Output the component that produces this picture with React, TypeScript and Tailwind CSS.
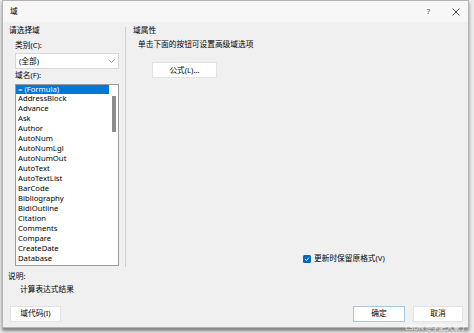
import React from "react";

const fields = [
  "AddressBlock",
  "Advance",
  "Ask",
  "Author",
  "AutoNum",
  "AutoNumLgl",
  "AutoNumOut",
  "AutoText",
  "AutoTextList",
  "BarCode",
  "Bibliography",
  "BidiOutline",
  "Citation",
  "Comments",
  "Compare",
  "CreateDate",
  "Database",
];

const font = {
  fontFamily: '"Noto Sans", "Noto Sans CJK SC", sans-serif',
};

const App = () => {
  return (
    <div
      className="w-[474px] h-[333px] bg-[#ebebeb] overflow-hidden text-[7.7px] text-black leading-none"
      style={font}
    >
      <div className="ml-[2px] w-[467px] h-[328px] bg-[#f0f0f0] border border-[#b4b4b4] flex flex-col shadow-[0_3px_3px_rgba(0,0,0,0.45)]">
        {/* Title bar */}
        <div className="h-[21px] bg-[#f7f7f7] flex items-center justify-between pl-[7px] pr-[8px]">
          <span>域</span>
          <div className="flex items-center gap-[22px] text-[#555]">
            <span>?</span>
            <svg width="8" height="8" viewBox="0 0 8 8">
              <path d="M0.5 0.5 L7.5 7.5 M7.5 0.5 L0.5 7.5" stroke="#333" strokeWidth="0.9" />
            </svg>
          </div>
        </div>

        {/* Body */}
        <div className="flex h-[245px] pt-[5px]">
          {/* Left pane */}
          <div className="w-[121px] pl-[6px] flex flex-col">
            <div>请选择域</div>
            <div className="mt-[7px] ml-[6px]">类别(C):</div>
            <div className="mt-[4px] ml-[6px] w-[104px] h-[16px] bg-white border border-[#d8d8d8] flex items-center justify-between pl-[3px] pr-[3px]">
              <span>(全部)</span>
              <svg width="7" height="4" viewBox="0 0 7 4">
                <path d="M0.5 0.5 L3.5 3.5 L6.5 0.5" stroke="#888" fill="none" strokeWidth="0.8" />
              </svg>
            </div>
            <div className="mt-[3px] ml-[6px]">域名(F):</div>
            <div className="mt-[4px] ml-[6px] w-[104px] h-[182px] bg-white border border-[#9a9a9a] flex">
              <div className="flex-1 flex flex-col">
                <div className="h-[9px] bg-[#0078d7] text-white flex items-center pl-[2px]">
                  = (Formula)
                </div>
                {fields.map((f) => (
                  <div key={f} className="h-[10px] flex items-center pl-[2px]">
                    {f}
                  </div>
                ))}
              </div>
              <div className="w-[9px] flex justify-center pt-[11px]">
                <div className="w-[4px] h-[36px] bg-[#8c8c8c]" />
              </div>
            </div>
          </div>

          {/* Separator */}
          <div className="w-px h-[240px] bg-[#d0d0d0] ml-[1px]" />

          {/* Right pane */}
          <div className="flex-1 pl-[7px] flex flex-col">
            <div>域属性</div>
            <div className="mt-[6px] ml-[5px]">单击下面的按钮可设置高级域选项</div>
            <div className="mt-[14px] ml-[19px] w-[65px] h-[16px] bg-white border border-[#e2e2e2] flex items-center justify-center">
              公式(L)...
            </div>
            <div className="mt-auto mb-[4px] ml-[170px] flex items-center gap-[3px]">
              <div className="w-[8px] h-[8px] bg-[#0067c0] rounded-[1.5px] flex items-center justify-center">
                <svg width="6" height="6" viewBox="0 0 6 6">
                  <path d="M1 3 L2.5 4.5 L5 1.5" stroke="white" fill="none" strokeWidth="0.9" />
                </svg>
              </div>
              <span>更新时保留原格式(V)</span>
            </div>
          </div>
        </div>

        {/* Description */}
        <div className="pl-[5px] pt-[6px] h-[35px] flex flex-col">
          <div>说明:</div>
          <div className="mt-[5px] ml-[12px]">计算表达式结果</div>
        </div>

        {/* Footer */}
        <div className="flex-1 flex items-start justify-between pl-[7px] pr-[5px] pt-[4px]">
          <div className="w-[51px] h-[16px] bg-white border border-[#e2e2e2] flex items-center justify-center">
            域代码(I)
          </div>
          <div className="flex gap-[8px] relative">
            <div className="w-[52px] h-[16px] bg-white border border-[#a8c8e0] flex items-center justify-center">
              确定
            </div>
            <div className="w-[50px] h-[16px] bg-white border border-[#e2e2e2] flex items-center justify-center">
              取消
            </div>
            <span className="absolute right-[-4px] top-[18px] text-[7px] text-white/80 whitespace-nowrap">
              CSDN @学肥大家了
            </span>
          </div>
        </div>
      </div>
    </div>
  );
};

export default App;
